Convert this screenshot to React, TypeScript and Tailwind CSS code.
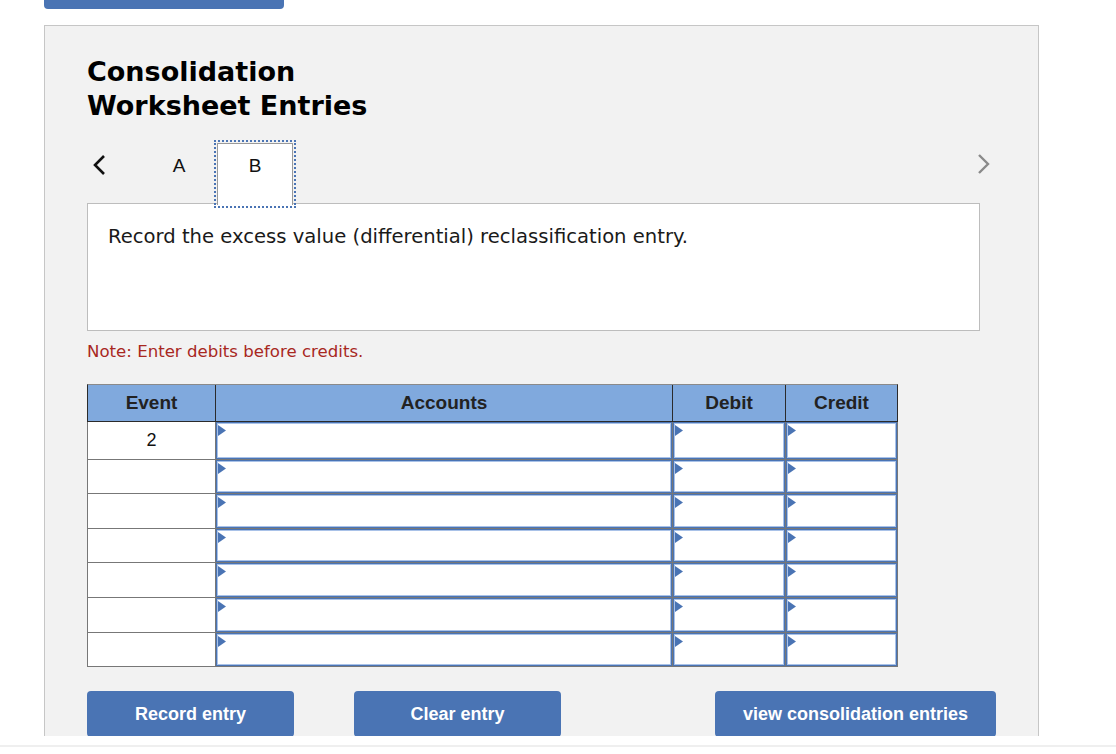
const verdana = "font-['DejaVu_Sans','Noto_Sans',sans-serif]";
const arial = "font-['Liberation_Sans',Arial,sans-serif]";

const rows = [
  { ev: "2", h: "h-[37px]" },
  { ev: "", h: "h-[33px]" },
  { ev: "", h: "h-[34px]" },
  { ev: "", h: "h-[33px]" },
  { ev: "", h: "h-[34px]" },
  { ev: "", h: "h-[34px]" },
  { ev: "", h: "h-[33px]" },
];

function Flag() {
  return (
    <svg
      className="absolute left-px top-[2px]"
      width="8"
      height="11"
      viewBox="0 0 8 11"
    >
      <polygon points="0,0 8,5.5 0,11" fill="#4a74b4" />
    </svg>
  );
}

function InputCell({ h }: { h: string }) {
  return (
    <div className={`bg-white ${h}`}>
      <div className="relative h-full border border-[#4a74b4] shadow-[inset_0_0_0_1px_#a9c2e8]">
        <Flag />
      </div>
    </div>
  );
}

export default function App() {
  return (
    <div className="h-[754px] w-full bg-white">
      <div className="h-[736px] overflow-hidden">
        {/* top bar */}
        <div className="ml-[44px] h-[9px] w-[240px] rounded-b-[4px] bg-[#4a74b4]" />

        {/* panel */}
        <div className="ml-[44px] mt-[16px] w-[995px] border border-[#c6c6c6] bg-[#f2f2f2] pl-[42px] pt-[29px] pb-10">
          <h2 className={`${verdana} text-[27px] font-bold leading-[34px] text-black`}>
            Consolidation
            <br />
            Worksheet Entries
          </h2>

          {/* tabs */}
          <div className={`${arial} mt-[20px] flex w-[904px] items-start text-[19px] text-[#111]`}>
            <div className="w-[54px] pl-[5px] pt-[11px]">
              <svg width="14" height="22" viewBox="0 0 14 22">
                <polyline
                  points="12,2 3,11 12,20"
                  fill="none"
                  stroke="#111"
                  strokeWidth="2.6"
                />
              </svg>
            </div>
            <div className="w-[76px] pt-[12px] text-center leading-[22px]">A</div>
            <div className="relative z-10 h-[62px] w-[76px] border-x border-t border-[#9a9a9a] bg-white pt-[11px] text-center leading-[22px] outline-2 outline-dotted outline-offset-1 outline-[#4a74b4]">
              B
            </div>
            <div className="ml-auto pt-[10px]">
              <svg width="14" height="22" viewBox="0 0 14 22">
                <polyline
                  points="2,2 11,11 2,20"
                  fill="none"
                  stroke="#8a8a8a"
                  strokeWidth="2.4"
                />
              </svg>
            </div>
          </div>

          {/* prompt */}
          <div className={`${verdana} -mt-[2px] h-[128px] w-[893px] border border-[#bdbdbd] bg-white pl-[20px] pt-[21px] text-[19.6px] leading-[24px] text-[#1a1a1a]`}>
            Record the excess value (differential) reclassification entry.
          </div>

          <p className={`${verdana} mt-[11px] text-[16.6px] leading-[20px] text-[#a8281f]`}>
            Note: Enter debits before credits.
          </p>

          {/* journal table */}
          <div className={`${arial} mt-[22px] w-[811px]`}>
            <div className="grid grid-cols-[127px_456px_112px_111px] gap-px border border-[#2b2b2b] border-t-[#8a8a8a] bg-[#2b2b2b] text-[19px] font-bold text-[#222]">
              <div className="flex h-[36px] items-center justify-center bg-[#80a9dd]">Event</div>
              <div className="flex h-[36px] items-center justify-center bg-[#80a9dd]">Accounts</div>
              <div className="flex h-[36px] items-center justify-center bg-[#80a9dd]">Debit</div>
              <div className="flex h-[36px] items-center justify-center bg-[#80a9dd]">Credit</div>
            </div>
            <div className="grid grid-cols-[127px_456px_112px_111px] gap-px border-x border-b border-[#777] bg-[#777]">
              {rows.map((r, i) => [
                <div
                  key={`e${i}`}
                  className={`flex items-center justify-center bg-white text-[18px] text-[#111] ${r.h}`}
                >
                  {r.ev}
                </div>,
                <InputCell key={`a${i}`} h={r.h} />,
                <InputCell key={`d${i}`} h={r.h} />,
                <InputCell key={`c${i}`} h={r.h} />,
              ])}
            </div>
          </div>

          {/* actions */}
          <div className={`${arial} mt-[24px] flex text-[18px] font-bold text-white`}>
            <button className="h-[46px] w-[207px] rounded-[4px] bg-[#4a74b4]">Record entry</button>
            <button className="ml-[60px] h-[46px] w-[207px] rounded-[4px] bg-[#4a74b4]">Clear entry</button>
            <button className="ml-[154px] h-[46px] w-[281px] rounded-[4px] bg-[#4a74b4]">
              view consolidation entries
            </button>
          </div>
        </div>
      </div>
      <div className="mt-[9px] h-[2px] bg-[#efefef]" />
    </div>
  );
}
